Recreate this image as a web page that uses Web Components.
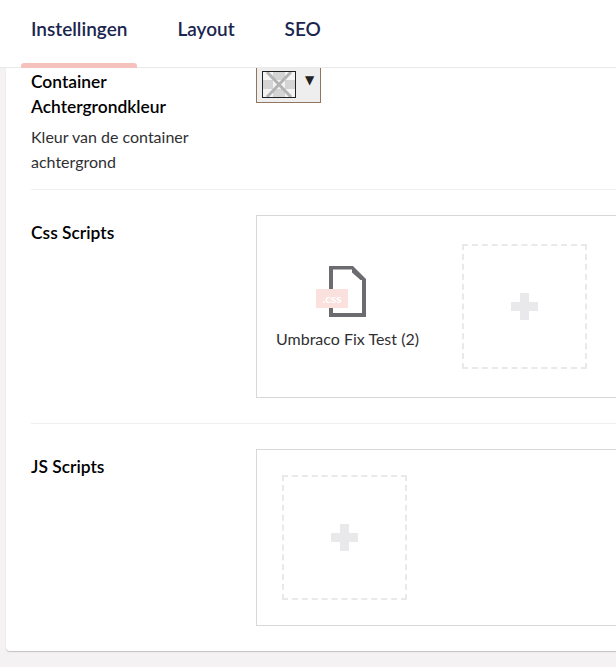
<!DOCTYPE html>
<html lang="nl">
<head>
<meta charset="utf-8">
<title>Instellingen</title>
<style>
    html, body { margin: 0; height: 100%; overflow: hidden; background: #f4f2f2; }
    body { font-family: Lato, "Liberation Sans", sans-serif; color: #000; }
</style>
</head>
<body>
<editor-panel>
    <tab-bar slot="tabs">
        <tab-item active>Instellingen</tab-item>
        <tab-item>Layout</tab-item>
        <tab-item>SEO</tab-item>
    </tab-bar>

    <prop-row class="first" description="Kleur van de container achtergrond" label="Container Achtergrondkleur">
        <color-picker></color-picker>
    </prop-row>
    <prop-row label="Css Scripts">
        <media-box pad="28px 0 28px 19px">
            <file-item ext=".css" name="Umbraco Fix Test (2)"></file-item>
            <add-tile></add-tile>
        </media-box>
    </prop-row>
    <prop-row label="JS Scripts" last>
        <media-box pad="25px 0 25px 25px">
            <add-tile></add-tile>
        </media-box>
    </prop-row>
</editor-panel>

<script>
class EditorPanel extends HTMLElement {
    constructor () {
        super();
        this.attachShadow({ mode: 'open' }).innerHTML = `
        <style>
            :host { display: flex; flex-direction: column; height: 667px; overflow: hidden; }
            .head { flex: none; background: #fff; border-bottom: 1px solid #e9e9eb; height: 67px; position: relative; z-index: 1; }
            .card {
                flex: none;
                width: 720px;
                height: 583px;
                margin-left: 6px;
                background: #fff;
                border-radius: 0 0 4px 4px;
                box-shadow: 0 1px 1px rgba(0, 0, 0, .2);
                overflow: hidden;
                box-sizing: border-box;
                padding: 0 0 0 25px;
            }
        </style>
        <div class="head"><slot name="tabs"></slot></div>
        <div class="card"><slot></slot></div>`;
    }
}

class TabBar extends HTMLElement {
    constructor () {
        super();
        this.attachShadow({ mode: 'open' }).innerHTML = `
        <style>
            :host { display: flex; gap: 30px; padding-left: 21px; height: 67px; }
        </style>
        <slot></slot>`;
    }
}

class TabItem extends HTMLElement {
    constructor () {
        super();
        this.attachShadow({ mode: 'open' }).innerHTML = `
        <style>
            :host {
                display: flex;
                align-items: center;
                position: relative;
                padding: 0 10px 11px;
                height: 67px;
                box-sizing: border-box;
                font-size: 19px;
                font-weight: 600;
                color: #1b264f;
            }
            :host([active])::after {
                content: '';
                position: absolute;
                left: 0;
                right: 0;
                bottom: -1px;
                height: 5px;
                background: #f5c1bc;
                border-radius: 3px 3px 0 0;
            }
        </style>
        <slot></slot>`;
    }
}

class PropRow extends HTMLElement {
    constructor () {
        super();
        this.attachShadow({ mode: 'open' }).innerHTML = `
        <style>
            :host { display: grid; grid-template-columns: 225px 1fr; padding: 25px 0; border-bottom: 1px solid #f0f0f2; }
            :host(.first) { margin-top: -18px; padding-top: 14px; padding-bottom: 15px; }
            :host([last]) { border-bottom: 0; }
            .label { font-size: 17.4px; font-weight: 600; line-height: 25px; color: #000; padding-right: 40px; margin-top: 5px; }
            .desc { font-size: 16px; line-height: 25px; color: #303033; padding-right: 30px; margin-top: 5px; }
            .desc:empty { display: none; }
        </style>
        <div>
            <div class="label"></div>
            <div class="desc"></div>
        </div>
        <div><slot></slot></div>`;
        this.shadowRoot.querySelector('.label').textContent = this.getAttribute('label');
        this.shadowRoot.querySelector('.desc').textContent = this.getAttribute('description') || '';
    }
}

class ColorPicker extends HTMLElement {
    constructor () {
        super();
        this.attachShadow({ mode: 'open' }).innerHTML = `
        <style>
            :host {
                display: flex;
                width: 65px;
                height: 48px;
                box-sizing: border-box;
                background: #eee;
                border: 1px solid #91765d;
                padding: 15px 0 0 5px;
                margin-top: -9px;
            }
            svg { display: block; width: 34px; height: 27px; flex: none; }
            .arrow { font: 12px "DejaVu Sans", sans-serif; color: #222; margin: 2px 0 0 9px; line-height: 14px; }
        </style>
        <svg viewBox="0 0 34 27">
            <rect width="34" height="27" fill="#f4f4f4"/>
            <path fill="#d4d4d4" d="M11 0h12v9H11zM0 9h11v9H0zM23 9h11v9H23zM11 18h12v9H11z"/>
            <path stroke="#b4b4b4" stroke-width="3" fill="none" d="M5 1l24 25M29 1L5 26"/>
            <rect x=".5" y=".5" width="33" height="26" fill="none" stroke="#222"/>
        </svg>
        <span class="arrow">▼</span>`;
    }
}

class MediaBox extends HTMLElement {
    constructor () {
        super();
        this.attachShadow({ mode: 'open' }).innerHTML = `
        <style>
            :host { display: flex; gap: 43px; border: 1px solid #d8d7d9; }
        </style>
        <slot></slot>`;
        this.style.padding = this.getAttribute('pad');
    }
}

class FileItem extends HTMLElement {
    constructor () {
        super();
        this.attachShadow({ mode: 'open' }).innerHTML = `
        <style>
            :host { display: flex; flex-direction: column; align-items: center; width: 143px; height: 125px; font-size: 16px; color: #303033; }
            .icon { position: relative; width: 37px; height: 51px; margin-top: 22px; }
            svg { display: block; width: 37px; height: 51px; }
            .ext {
                position: absolute;
                left: -13px;
                top: 23px;
                width: 32px;
                height: 19px;
                background: #fbe1de;
                color: #fff;
                font-size: 12px;
                font-weight: 700;
                line-height: 19px;
                text-align: center;
            }
            .name { margin-top: 12px; line-height: 20px; white-space: nowrap; }
        </style>
        <div class="icon">
            <svg viewBox="0 0 37 51">
                <path fill="#6c6c70" fill-rule="evenodd" d="M0 0H24L37 13V51H0zM4 3.5V47H33V14H31.5L23 6.5V3.5z"/>
            </svg>
            <span class="ext"></span>
        </div>
        <div class="name"></div>`;
        this.shadowRoot.querySelector('.ext').textContent = this.getAttribute('ext');
        this.shadowRoot.querySelector('.name').textContent = this.getAttribute('name');
    }
}

class AddTile extends HTMLElement {
    constructor () {
        super();
        this.attachShadow({ mode: 'open' }).innerHTML = `
        <style>
            :host { display: flex; align-items: center; justify-content: center; width: 125px; height: 125px; box-sizing: border-box; border: 2px dashed #e9e9eb; }
            svg { display: block; width: 27px; height: 27px; }
        </style>
        <svg viewBox="0 0 27 27"><path fill="#e9e9eb" d="M9 0h9v9h9v9h-9v9H9v-9H0V9h9z"/></svg>`;
    }
}

customElements.define('editor-panel', EditorPanel);
customElements.define('tab-bar', TabBar);
customElements.define('tab-item', TabItem);
customElements.define('prop-row', PropRow);
customElements.define('color-picker', ColorPicker);
customElements.define('media-box', MediaBox);
customElements.define('file-item', FileItem);
customElements.define('add-tile', AddTile);
</script>
</body>
</html>
